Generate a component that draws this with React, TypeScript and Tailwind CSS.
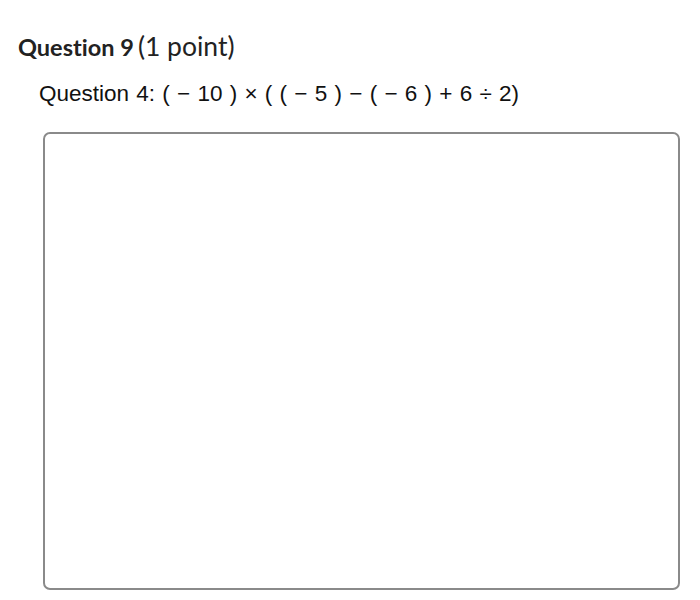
export default function App() {
  return (
    <div className="w-[700px] h-[600px] bg-white overflow-hidden">
      <div className="pl-[18px] pt-[30px]">
        <h2 className="text-[#222] leading-[32px] font-['Lato',sans-serif] [font-variant-ligatures:none]">
          <span className="font-bold text-[23.5px]">Question 9</span>{" "}
          <span className="text-[26.5px]">(1 point)</span>
        </h2>
        <p className="mt-[15px] ml-[21px] text-[22.5px] leading-[26px] [word-spacing:1px] text-[#111] font-['Liberation_Sans',Arial,sans-serif]">
          Question 4: ( − 10 ) × ( ( − 5 ) − ( − 6 ) + 6 ÷ 2)
        </p>
        <div className="mt-[25px] ml-[25px] w-[637px] h-[458px] border-2 border-[#8a8a8a] rounded-[7px] bg-white" />
      </div>
    </div>
  );
}
